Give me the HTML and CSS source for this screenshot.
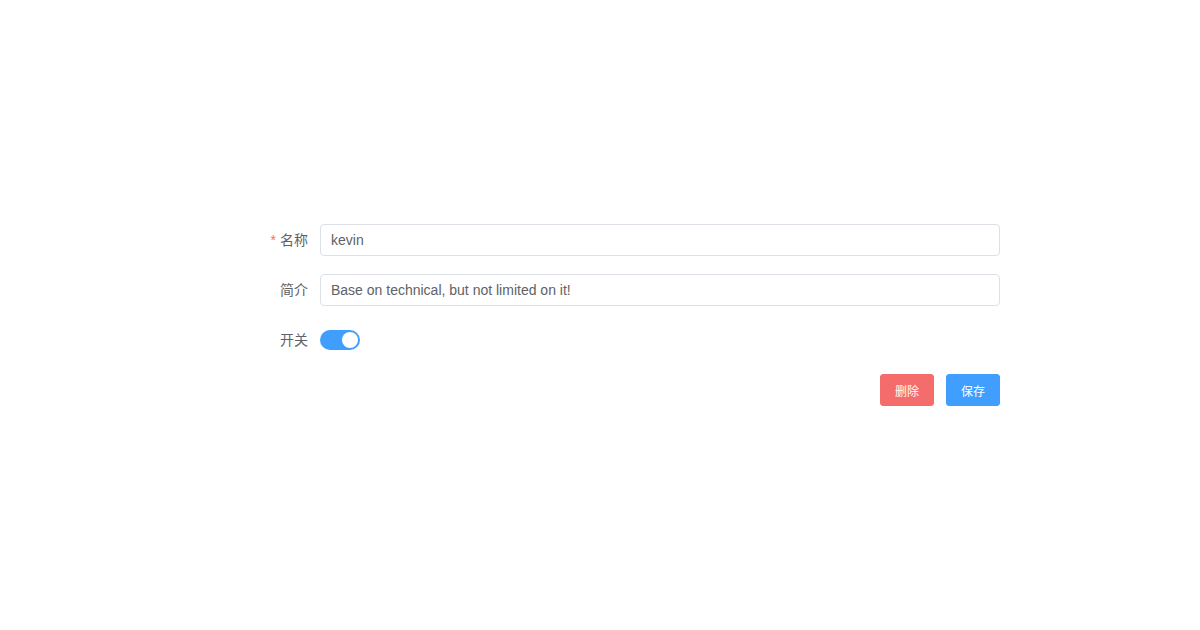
FILE: index.html
```html
<!DOCTYPE html>
<html lang="zh-CN">

<head>
    <meta charset="utf-8">
    <meta name="viewport" content="width=device-width, initial-scale=1.0">
    <title>表单</title>
    <link rel="stylesheet" href="styles.css">
</head>

<body>
    <main class="page">
        <form class="form">
            <div class="form-item">
                <label class="label required">名称</label>
                <div class="content">
                    <input class="input" type="text" value="kevin">
                </div>
            </div>
            <div class="form-item">
                <label class="label">简介</label>
                <div class="content">
                    <input class="input" type="text" value="Base on technical, but not limited on it!">
                </div>
            </div>
            <div class="form-item">
                <label class="label">开关</label>
                <div class="content">
                    <span class="switch is-on"><span class="switch-dot"></span></span>
                </div>
            </div>
            <div class="form-item actions">
                <button type="button" class="btn btn-danger">删除</button>
                <button type="button" class="btn btn-primary">保存</button>
            </div>
        </form>
    </main>
</body>

</html>
```

FILE: styles.css
```css
html,
body {
    margin: 0;
    padding: 0;
    background: #fff;
}

body {
    font-family: "Liberation Sans", Arial, "Noto Sans CJK SC", sans-serif;
    font-size: 14px;
    color: #606266;
}

.page {
    height: 630px;
    display: flex;
    align-items: center;
    justify-content: center;
}

.form {
    width: 800px;
}

.form-item {
    display: flex;
    margin-bottom: 18px;
}

.form-item:last-child {
    margin-bottom: 0;
}

.label {
    width: 120px;
    box-sizing: border-box;
    padding-right: 12px;
    text-align: right;
    line-height: 32px;
    font-size: 14px;
    color: #606266;
}

.required::before {
    content: "*";
    color: #f56c6c;
    margin-right: 4px;
}

.content {
    flex: 1;
    display: flex;
    align-items: center;
    height: 32px;
}

.input {
    width: 100%;
    height: 32px;
    box-sizing: border-box;
    border: 1px solid #dcdfe6;
    border-radius: 4px;
    padding: 0 10px;
    font-family: "Liberation Sans", Arial, sans-serif;
    font-size: 14px;
    color: #606266;
    outline: none;
}

.switch {
    position: relative;
    display: inline-block;
    width: 40px;
    height: 20px;
    border-radius: 10px;
    background: #dcdfe6;
}

.switch.is-on {
    background: #409eff;
}

.switch-dot {
    position: absolute;
    top: 2px;
    left: 2px;
    width: 16px;
    height: 16px;
    border-radius: 50%;
    background: #fff;
}

.switch.is-on .switch-dot {
    left: 22px;
}

.actions {
    justify-content: flex-end;
    gap: 12px;
}

.btn {
    height: 32px;
    padding: 0 14px;
    border: 1px solid transparent;
    border-radius: 3px;
    font-family: "Liberation Sans", Arial, "Noto Sans CJK SC", sans-serif;
    font-size: 12px;
    color: #fff;
    cursor: pointer;
}

.btn-danger {
    background: #f56c6c;
    border-color: #f56c6c;
}

.btn-primary {
    background: #409eff;
    border-color: #409eff;
}
```
